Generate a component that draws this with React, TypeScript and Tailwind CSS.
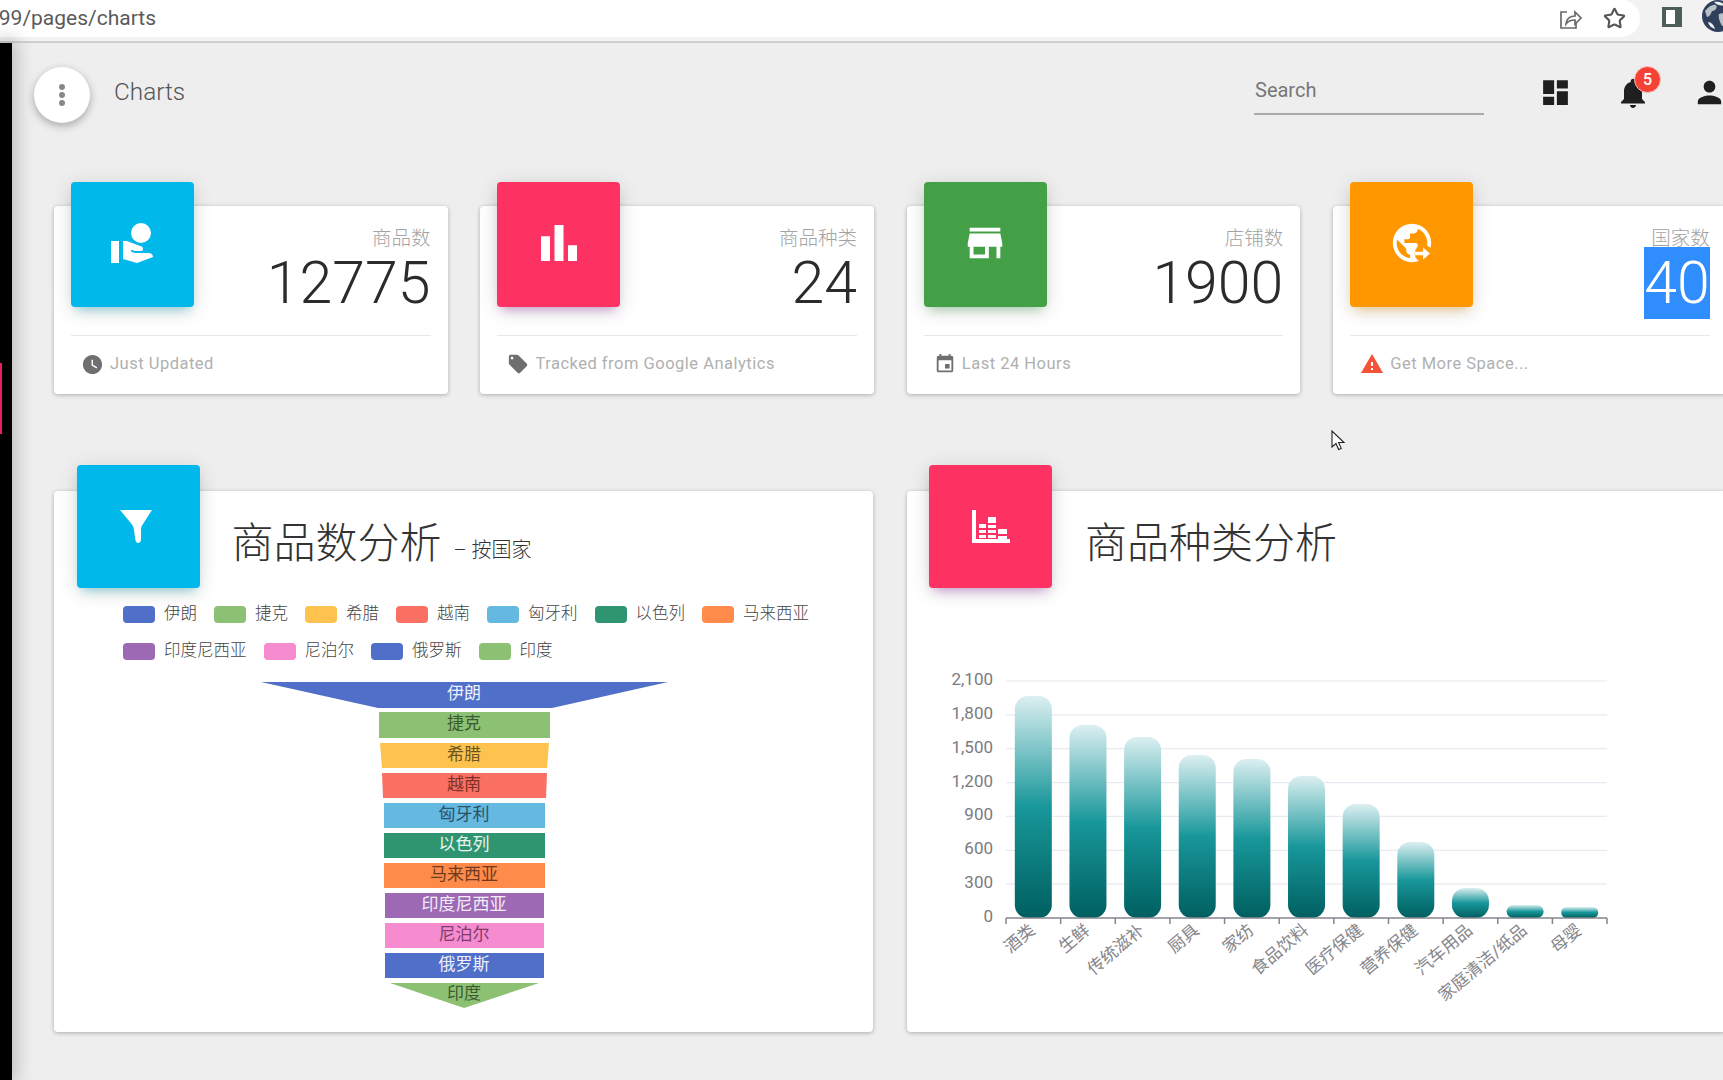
import type { ReactNode } from "react";
import { Star } from "lucide-react";

// material glyph paths, 24 unit box
const ICONS = {
  hand: "M1 11h4v11H1zM20 17h-7l-2.09-.73.33-.94L13 16h2.82c.65 0 1.18-.53 1.18-1.18 0-.49-.31-.93-.77-1.11L8.97 11H7v9.02L14 22l8.01-3c-.01-1.1-.9-2-2.01-2z",
  bars: "M4 9h4v11H4zm12 4h4v7h-4zm-6-9h4v16h-4z",
  store: "M20 4H4v2h16V4zm1 10v-2l-1-5H4l-1 5v2h1v6h10v-6h4v6h2v-6h1zm-9 4H6v-4h6v4z",
  globe:
    "M12 2C6.48 2 2 6.48 2 12s4.48 10 10 10 10-4.48 10-10S17.52 2 12 2zm-1 17.93c-3.95-.49-7-3.85-7-7.93 0-.62.08-1.21.21-1.79L9 15v1c0 1.1.9 2 2 2v1.93zm6.9-2.54c-.26-.81-1-1.39-1.9-1.39h-1v-3c0-.55-.45-1-1-1H8v-2h2c.55 0 1-.45 1-1V7h2c1.1 0 2-.9 2-2v-.41c2.93 1.19 5 4.06 5 7.41 0 2.08-.8 3.97-2.1 5.39z",
  clock: "M12 2C6.5 2 2 6.5 2 12s4.5 10 10 10 10-4.5 10-10S17.5 2 12 2zm4.2 14.2L11 13V7h1.5v5.2l4.5 2.7-.8 1.3z",
  tag: "M21.41 11.58l-9-9C12.05 2.22 11.55 2 11 2H4c-1.1 0-2 .9-2 2v7c0 .55.22 1.05.59 1.42l9 9c.36.36.86.58 1.41.58.55 0 1.05-.22 1.41-.59l7-7c.37-.36.59-.86.59-1.41 0-.55-.23-1.06-.59-1.42zM5.5 7C4.67 7 4 6.33 4 5.5S4.67 4 5.5 4 7 4.67 7 5.5 6.33 7 5.5 7z",
  event: "M17 12h-5v5h5v-5zM16 1v2H8V1H6v2H5c-1.11 0-1.99.9-1.99 2L3 19c0 1.1.89 2 2 2h14c1.1 0 2-.9 2-2V5c0-1.1-.9-2-2-2h-1V1h-2zm3 18H5V8h14v11z",
  warning: "M1 21h22L12 2 1 21zm12-3h-2v-2h2v2zm0-4h-2v-4h2v4z",
  dashboard: "M3 13h8V3H3v10zm0 8h8v-6H3v6zm10 0h8V11h-8v10zm0-18v6h8V3h-8z",
  bell: "M12 22c1.1 0 2-.9 2-2h-4c0 1.1.89 2 2 2zm6-6v-5c0-3.07-1.64-5.64-4.5-6.32V4c0-.83-.67-1.5-1.5-1.5s-1.5.67-1.5 1.5v.68C7.63 5.36 6 7.92 6 11v5l-2 2v1h16v-1l-2-2z",
  person: "M12 12c2.21 0 4-1.79 4-4s-1.79-4-4-4-4 1.79-4 4 1.79 4 4 4zm0 2c-2.67 0-8 1.34-8 4v2h16v-2c0-2.66-5.33-4-8-4z",
};

function Glyph({ d, className, children }: { d: string; className: string; children?: ReactNode }) {
  return (
    <svg viewBox="0 0 24 24" fill="currentColor" className={className}>
      <path d={d} />
      {children}
    </svg>
  );
}

const STATS = [
  {
    title: "商品数",
    value: "12775",
    foot: "Just Updated",
    box: "bg-[#00b8ea] shadow-[0_4px_20px_0_rgba(0,0,0,0.14),0_7px_10px_-5px_rgba(0,172,193,0.4)]",
    icon: (
      <Glyph d={ICONS.hand} className="size-[48px] text-white">
        <circle cx="16" cy="7" r="5" />
      </Glyph>
    ),
    footIcon: <Glyph d={ICONS.clock} className="size-[23px] text-[#6f6f6f]" />,
  },
  {
    title: "商品种类",
    value: "24",
    foot: "Tracked from Google Analytics",
    box: "bg-[#fd3263] shadow-[0_4px_20px_0_rgba(0,0,0,0.14),0_7px_10px_-5px_rgba(156,39,176,0.4)]",
    icon: <Glyph d={ICONS.bars} className="size-[54px] text-white" />,
    footIcon: <Glyph d={ICONS.tag} className="size-[22px] text-[#6f6f6f]" />,
  },
  {
    title: "店铺数",
    value: "1900",
    foot: "Last 24 Hours",
    box: "bg-[#43a047] shadow-[0_4px_20px_0_rgba(0,0,0,0.14),0_7px_10px_-5px_rgba(76,175,80,0.4)]",
    icon: <Glyph d={ICONS.store} className="size-[46px] text-white" />,
    footIcon: <Glyph d={ICONS.event} className="size-[22px] text-[#6f6f6f]" />,
  },
  {
    title: "国家数",
    value: "40",
    selected: true,
    foot: "Get More Space...",
    box: "bg-[#ff9800] shadow-[0_4px_20px_0_rgba(0,0,0,0.14),0_7px_10px_-5px_rgba(255,152,0,0.4)]",
    icon: (
      <Glyph d={ICONS.globe} className="size-[46px] text-white">
        <circle cx="18" cy="17.5" r="4.6" fill="#ff9800" />
        <path d="M13.6 16.6h4.2v-2.2l3.6 3.1-3.6 3.1v-2.2h-4.2z" fill="#fff" />
      </Glyph>
    ),
    footIcon: <Glyph d={ICONS.warning} className="size-[24px] text-[#f4533a]" />,
  },
];

const LEGEND = [
  ["伊朗", "bg-[#4f6fc9]"],
  ["捷克", "bg-[#8cc173]"],
  ["希腊", "bg-[#fdc34e]"],
  ["越南", "bg-[#fa7062]"],
  ["匈牙利", "bg-[#65b8e0]"],
  ["以色列", "bg-[#2f9470]"],
  ["马来西亚", "bg-[#ff8b4b]"],
  ["印度尼西亚", "bg-[#9d68b4]"],
  ["尼泊尔", "bg-[#f78bd0]"],
  ["俄罗斯", "bg-[#4f6fc9]"],
  ["印度", "bg-[#8cc173]"],
];

// [label, fill, text colour, polygon in page px]
const FUNNEL: [string, string, string, string][] = [
  ["伊朗", "#4f6fc9", "#eef1fa", "261,681 668,681 552,707 378,707"],
  ["捷克", "#8cc173", "#3c5a30", "379,711 550,711 550,737 379,737"],
  ["希腊", "#fdc34e", "#6e5520", "380,742 549,742 547,767 382,767"],
  ["越南", "#fa7062", "#7a3028", "382,772 547,772 546,797 383,797"],
  ["匈牙利", "#65b8e0", "#2a5268", "384,802 545,802 545,827 384,827"],
  ["以色列", "#2f9470", "#e8f4ef", "384,832 545,832 545,857 384,857"],
  ["马来西亚", "#ff8b4b", "#703a1e", "384,862 545,862 545,887 384,887"],
  ["印度尼西亚", "#9d68b4", "#f3ecf6", "385,892 544,892 544,917 385,917"],
  ["尼泊尔", "#f78bd0", "#803d6a", "385,922 544,922 544,947 385,947"],
  ["俄罗斯", "#4f6fc9", "#eef1fa", "385,952 544,952 544,977 385,977"],
  ["印度", "#8cc173", "#3c5a30", "390,982 539,982 464,1007"],
];

const AXIS_X0 = 1005;
const AXIS_STEP = 54.64;
const BASE_Y = 918;

const BARS: [string, number][] = [
  ["酒类", 696],
  ["生鲜", 725],
  ["传统滋补", 737],
  ["厨具", 755],
  ["家纺", 759],
  ["食品饮料", 776],
  ["医疗保健", 804],
  ["营养保健", 842],
  ["汽车用品", 888],
  ["家庭清洁/纸品", 905],
  ["母婴", 907],
];

const Y_TICKS = ["0", "300", "600", "900", "1,200", "1,500", "1,800", "2,100"];

function FunnelChart() {
  return (
    <svg viewBox="54 670 819 350" className="mt-[10px] h-[350px] w-[819px]">
      {FUNNEL.map(([label, fill, color, points], i) => {
        const ys = points.split(" ").map((p) => Number(p.split(",")[1]));
        const mid = (ys[0] + ys[ys.length - 1]) / 2;
        return (
          <g key={i}>
            <polygon points={points} fill={fill} />
            <text
              x={464}
              y={label === "印度" ? 998 : mid + 4}
              textAnchor="middle"
              fontSize="17"
              fill={color}
            >
              {label}
            </text>
          </g>
        );
      })}
    </svg>
  );
}

function BarChart() {
  return (
    <svg viewBox="906 660 819 360" className="mt-[72px] h-[360px] w-[819px]">
      <defs>
        <linearGradient id="barFill" x1="0" y1="0" x2="0" y2="1">
          <stop offset="0" stopColor="#dceff1" />
          <stop offset="0.5" stopColor="#18979a" />
          <stop offset="1" stopColor="#005f60" />
        </linearGradient>
      </defs>
      {Y_TICKS.map((label, i) => {
        const y = BASE_Y - i * 33.86;
        return (
          <g key={label}>
            {i > 0 && <line x1={AXIS_X0} x2={1606} y1={y} y2={y} stroke="#e8eaf1" strokeWidth="1.2" />}
            <text x={992} y={y + 4} textAnchor="end" fontSize="17" fill="#7b7b7f">
              {label}
            </text>
          </g>
        );
      })}
      {BARS.map(([label, top], i) => {
        const cx = AXIS_X0 + AXIS_STEP * (i + 0.5);
        const h = BASE_Y - top;
        return (
          <g key={label}>
            <rect
              x={cx - 18.5}
              y={top}
              width={37}
              height={h}
              rx={Math.min(13, h / 2)}
              fill="url(#barFill)"
            />
            <text
              transform={`translate(${cx + 3} 932) rotate(-40)`}
              textAnchor="end"
              fontSize="17"
              fill="#85858a"
            >
              {label}
            </text>
          </g>
        );
      })}
      <line x1={AXIS_X0} x2={1606} y1={BASE_Y} y2={BASE_Y} stroke="#85858c" strokeWidth="1.5" />
      {Array.from({ length: 12 }, (_, i) => (
        <line
          key={i}
          x1={AXIS_X0 + AXIS_STEP * i}
          x2={AXIS_X0 + AXIS_STEP * i}
          y1={BASE_Y}
          y2={BASE_Y + 6}
          stroke="#85858c"
          strokeWidth="1.5"
        />
      ))}
    </svg>
  );
}

function StatCard({ stat }: { stat: (typeof STATS)[number] }) {
  return (
    <div className="h-[188px] w-[393.5px] shrink-0 rounded-[4px] bg-white px-[17px] shadow-[0_1px_4px_0_rgba(0,0,0,0.28)]">
      <div className="flex justify-between">
        <div className={`-mt-[24px] flex h-[125px] w-[123px] items-center justify-center rounded-[4px] pb-[3px] ${stat.box}`}>
          {stat.icon}
        </div>
        <div className="pt-[24px] text-right">
          <p className="text-[19.5px] leading-[17px] font-light text-[#a3a3a3]">{stat.title}</p>
          <p className="text-[59px] leading-[72px] font-[285] text-[#2b2b2b]">
            {stat.selected ? <span className="inline-block bg-[#2f8dfd] text-white">{stat.value}</span> : stat.value}
          </p>
        </div>
      </div>
      <div className="mt-[16px] flex h-[59px] items-center gap-[6px] border-t border-[#e8e8e8] pb-[2px] pl-[10px]">
        {stat.footIcon}
        <span className="text-[16.5px] tracking-[0.5px] text-[#b0b0b0]">{stat.foot}</span>
      </div>
    </div>
  );
}

function FunnelIcon() {
  return (
    <svg viewBox="0 0 32 33" fill="#fff" className="mr-[4px] h-[33px] w-[32px]">
      <path d="M0 0h32l-9 14c-1.6 2.4-2 3.6-2 6v9c0 2.6-1.4 4-2.8 4-1.6 0-2.6-1.4-3-4l-1.2-9c-.3-2.4-.8-3.6-2.4-6z" />
    </svg>
  );
}

function StackedIcon() {
  return (
    <svg viewBox="0 0 38 33" fill="#fff" className="h-[33px] w-[38px]">
      <path d="M0 0h4v29h34v4H0z" />
      <path d="M7 14h7v4H7zm0 6h7v3H7zm0 5h7v3H7zm9-18h8v6h-8zm0 8h8v3h-8zm0 5h8v3h-8zm0 5h8v3h-8zm10 -6h9v5h-9zm0 7h9v4h-9z" />
    </svg>
  );
}

export default function App() {
  return (
    <div className="relative flex h-[1080px] w-[1723px] flex-col overflow-hidden bg-[#eeeeee] font-['Roboto','Noto_Sans_CJK_SC',sans-serif]">
      {/* browser toolbar */}
      <div className="flex h-[43px] shrink-0 items-start border-b-2 border-[#cfcfcf] bg-[#f2f2f2]">
        <div className="flex h-[37px] w-[1640px] shrink-0 items-center justify-end overflow-hidden rounded-r-[19px] bg-white pr-[14px]">
          <span className="mr-auto -ml-[13px] text-[21px] text-[#5a5a5a]">999/pages/charts</span>
          <svg viewBox="0 0 24 24" fill="none" stroke="#6a6a6a" strokeWidth="1.7" className="mr-[21px] size-[24px]">
            <path d="M9 5H3v16h15v-5" />
            <path d="M8 17c0-5 4-8 9-8V5l6 6-6 6v-4c-4 0-7 1-9 4z" />
          </svg>
          <Star className="size-[23px] text-[#555]" strokeWidth={2.2} />
        </div>
        <div className="mt-[7px] ml-[22px] h-[20px] w-[20px] shrink-0 border-y-[3px] border-r-[7px] border-l-[4px] border-[#4c5e57] bg-white" />
        <svg viewBox="0 0 32 32" className="ml-[20px] size-[32px] shrink-0">
          <circle cx="16" cy="16" r="16" fill="#2f3f5c" />
          <path d="M3 11c4-5 8-7 11-6 2 3-1 6-4 6-1 3-3 6-5 6zM17 14c4-2 8 0 11 3-2 5-5 8-8 9-2-4-4-8-3-12z" fill="#b9c0c6" />
          <path d="M12 2c4-1 8 0 11 3-3 1-7 1-11-3zM6 22c3 0 6 3 7 7-3-1-6-3-7-7z" fill="#eef1f3" />
        </svg>
      </div>

      <div className="flex min-h-0 flex-1">
        {/* collapsed sidebar */}
        <aside className="z-10 w-[12px] shrink-0 bg-black shadow-[0_0_18px_4px_rgba(0,0,0,0.22)]">
          <div className="mt-[320px] h-[71px] w-[2px] bg-[#e91e63]" />
        </aside>

        <main className="min-w-0 flex-1 pl-[42px]">
          <header className="-ml-[20px] mt-[24px] flex h-[56px] items-center">
            <button className="flex size-[56px] shrink-0 flex-col items-center justify-center gap-[1.5px] rounded-full bg-white shadow-[0_3px_8px_0_rgba(0,0,0,0.3)]">
              <span className="size-[6.5px] rounded-full bg-[#888]" />
              <span className="size-[6.5px] rounded-full bg-[#888]" />
              <span className="size-[6.5px] rounded-full bg-[#888]" />
            </button>
            <h1 className="mb-[6px] ml-[24px] text-[24.3px] font-light text-[#555]">Charts</h1>
            <div className="mb-[7px] ml-auto h-[47px] w-[230px] border-b-[2px] border-[#a9a9a9] pl-[1px] text-[20px] leading-[45px] text-[#777]">
              Search
            </div>
            <Glyph d={ICONS.dashboard} className="mb-[6px] ml-[55px] size-[33px] text-[#1f1f1f]" />
            <div className="relative mb-[4px] ml-[43px]">
              <Glyph d={ICONS.bell} className="size-[36px] text-[#1f1f1f]" />
              <span className="absolute -top-[9px] left-[19px] flex size-[27px] items-center justify-center rounded-full border border-[#f7c4bd] bg-[#f44336] text-[16px] font-medium text-white">
                5
              </span>
            </div>
            <Glyph d={ICONS.person} className="mr-[-4px] mb-[6px] ml-[41px] size-[35px] text-[#1f1f1f]" />
          </header>

          <section className="mt-[83px] flex gap-[32.9px]">
            {STATS.map((stat) => (
              <StatCard key={stat.title} stat={stat} />
            ))}
          </section>

          <section className="mt-[97px] flex gap-[33.5px]">
            <div className="h-[541px] w-[819px] shrink-0 rounded-[4px] bg-white shadow-[0_1px_4px_0_rgba(0,0,0,0.28)]">
              <div className="flex h-[97px] pl-[22.5px]">
                <div className="-mt-[26px] flex size-[123px] items-center justify-center rounded-[4px] bg-[#00b8ea] shadow-[0_4px_20px_0_rgba(0,0,0,0.14),0_7px_10px_-5px_rgba(0,172,193,0.4)]">
                  <FunnelIcon />
                </div>
                <div className="mt-[27px] ml-[32px] flex items-baseline text-[#333]">
                  <h2 className="text-[42px] leading-[52px] font-light">商品数分析</h2>
                  <span className="ml-[12px] -translate-y-px text-[20px] font-light">– 按国家</span>
                </div>
              </div>
              <div className="mt-[16px] flex w-[780px] flex-wrap gap-x-[17px] gap-y-[17px] pl-[69px]">
                {LEGEND.map(([label, color], i) => (
                  <div key={i} className="flex h-[20px] items-center gap-[9px]">
                    <span className={`h-[17px] w-[32px] rounded-[4px] ${color}`} />
                    <span className="text-[16.5px] font-light text-[#444]">{label}</span>
                  </div>
                ))}
              </div>
              <FunnelChart />
            </div>

            <div className="h-[541px] w-[819px] shrink-0 rounded-[4px] bg-white shadow-[0_1px_4px_0_rgba(0,0,0,0.28)]">
              <div className="flex h-[97px] pl-[22.5px]">
                <div className="-mt-[26px] flex size-[123px] items-center justify-center rounded-[4px] bg-[#fd3263] shadow-[0_4px_20px_0_rgba(0,0,0,0.14),0_7px_10px_-5px_rgba(156,39,176,0.4)]">
                  <StackedIcon />
                </div>
                <h2 className="mt-[27px] ml-[33px] text-[42px] leading-[52px] font-light text-[#333]">商品种类分析</h2>
              </div>
              <BarChart />
            </div>
          </section>
        </main>
      </div>

      {/* mouse pointer */}
      <svg viewBox="0 0 16 22" className="absolute top-[430px] left-[1331px] h-[22px] w-[16px]">
        <path d="M1 1v16l4-3.5 2.6 6 2.6-1.1-2.6-5.9H13z" fill="#fff" stroke="#222" strokeWidth="1.1" />
      </svg>
    </div>
  );
}
